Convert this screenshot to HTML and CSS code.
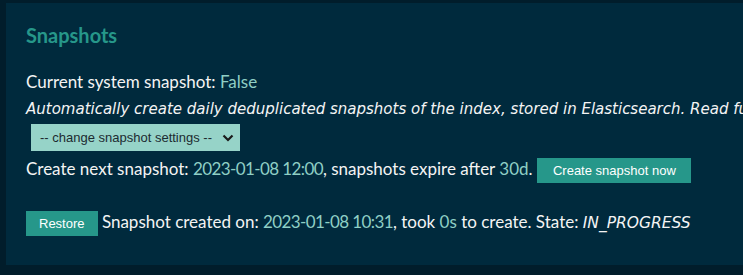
FILE: index.html
```html
<!DOCTYPE html>
<html>
<head>
<meta charset="utf-8">
<link rel="stylesheet" href="styles.css">
</head>
<body>
<div class="panel">
  <h2 class="title">Snapshots</h2>
  <p class="line first">Current system snapshot: <span class="val">False</span></p>
  <p class="line italic">Automatically create daily deduplicated snapshots of the index, stored in Elasticsearch. Read further information</p>
  <div class="selrow">
    <div class="select">-- change snapshot settings -- <svg class="chev" width="12" height="8" viewBox="0 0 12 8"><path d="M1.5 1.5 L6 6 L10.5 1.5" fill="none" stroke="#1a1a1a" stroke-width="2.2"/></svg></div>
  </div>
  <p class="line next">Create next snapshot: <span class="val num">2023-01-08 12:00</span>, snapshots expire after <span class="val">30d</span>. <span class="btn create">Create snapshot now</span></p>
  <p class="line restore"><span class="btn">Restore</span> Snapshot created on: <span class="val num">2023-01-08 10:31</span>, took <span class="val">0s</span> to create. State: <i class="state">IN_PROGRESS</i></p>
</div>
</body>
</html>
```
FILE: styles.css
```css
html, body { margin: 0; padding: 0; }
body {
  background: #011d2b;
  width: 743px;
  height: 275px;
  overflow: hidden;
  font-family: Lato, "Open Sans", sans-serif;
  color: #f4f4f4;
}
.panel {
  margin: 3px 0 0 6px;
  height: 262px;
  background: #002a3d;
  padding: 0 0 0 20px;
  box-sizing: border-box;
  white-space: nowrap;
  overflow: hidden;
}
.title {
  margin: 0;
  padding-top: 20px;
  font-size: 20px;
  font-weight: bold;
  color: #26978a;
  line-height: 24px;
}
.line {
  margin: 0;
  font-size: 17px;
  line-height: 22px;
}
.first { margin-top: 24px; }
.italic {
  font-family: "DejaVu Sans", Verdana, sans-serif;
  font-style: italic;
  font-size: 15px;
  margin-top: 5px;
}
.state {
  font-family: "DejaVu Sans", Verdana, sans-serif;
  font-size: 15.5px;
}
.val { color: #8fcfc5; }
.num { letter-spacing: -0.6px; }
.selrow { margin-top: 4px; padding-left: 5px; }
.select {
  display: inline-flex;
  align-items: center;
  justify-content: space-between;
  width: 209px;
  height: 27px;
  box-sizing: border-box;
  padding: 0 6px 0 9px;
  background: #96d3c8;
  color: #1c2b30;
  font-family: "Liberation Sans", Arial, sans-serif;
  font-size: 13px;
}
.next { margin-top: 7px; }
.btn {
  display: inline-block;
  background: #26978a;
  color: #fff;
  font-family: "Liberation Sans", Arial, sans-serif;
  font-size: 13px;
  line-height: 25px;
  padding: 0 13px;
  vertical-align: middle;
}
.btn.create { padding: 0 15px 0 16px; }
.restore { margin-top: 28px; }
```
